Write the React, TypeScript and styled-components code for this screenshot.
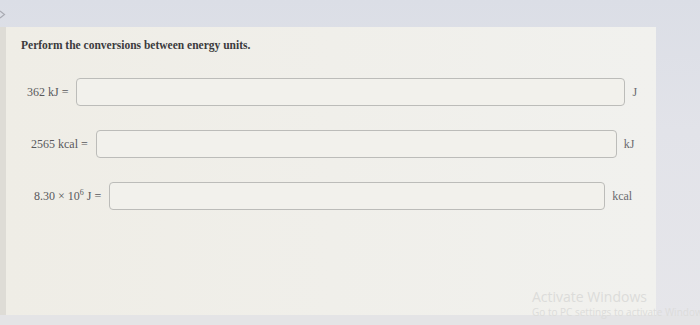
import React, { FC } from "react";
import styled, { createGlobalStyle } from "styled-components";

const GlobalStyle = createGlobalStyle`
  html, body {
    margin: 0;
    padding: 0;
    width: 700px;
    height: 325px;
    overflow: hidden;
    background-color: #e1e3e9;
  }
  #root {
    width: 700px;
    height: 325px;
  }
`;

const Screen = styled.div`
  position: relative;
  width: 700px;
  height: 325px;
  display: flex;
  flex-direction: column;
  background: linear-gradient(180deg, #dbdee6 0%, #e2e3e9 40%, #e6e6ea 100%);
`;

const TopBar = styled.div`
  height: 27px;
  display: flex;
  align-items: flex-start;
  padding-top: 10px;
  box-sizing: border-box;
`;

const Middle = styled.div`
  display: flex;
  height: 288px;
`;

const LeftStrip = styled.div`
  width: 6px;
  background-color: #dedcd6;
`;

const Panel = styled.div`
  width: 650px;
  box-sizing: border-box;
  padding: 11px 0 0 15px;
  background: linear-gradient(90deg, #efede6 0%, #f0efea 50%, #f1f1ee 100%);
  font-family: "Liberation Serif", "Times New Roman", serif;
`;

const BottomStrip = styled.div`
  flex: 1;
  background-color: #e4e4e6;
`;

const Title = styled.div`
  font-size: 11.5px;
  line-height: 14px;
  font-weight: bold;
  color: #3b3b3d;
  margin-bottom: 26px;
`;

const Row = styled.div<{ $indent: number }>`
  display: flex;
  align-items: center;
  height: 28px;
  padding-left: ${(p) => p.$indent}px;
  margin-bottom: 24px;
`;

const Label = styled.span`
  font-size: 12px;
  color: #59595c;
  white-space: nowrap;
  margin-right: 8px;

  sup {
    font-size: 8px;
  }
`;

const Field = styled.input<{ $width: number }>`
  width: ${(p) => p.$width}px;
  height: 28px;
  box-sizing: border-box;
  border: 1px solid #bcbcb9;
  border-radius: 4px;
  background-color: #f2f1ec;
  outline: none;
`;

const Unit = styled.span`
  font-size: 12px;
  color: #6a6a6e;
  margin-left: 7px;
`;

const Watermark = styled.div`
  position: absolute;
  left: 532px;
  top: 288px;
  font-family: "Open Sans", "DejaVu Sans", sans-serif;
  color: #dcdcda;
  white-space: nowrap;

  .big {
    font-size: 14px;
    line-height: 18px;
  }
  .small {
    font-size: 10px;
    line-height: 13px;
  }
`;

type Conversion = {
  indent: number;
  width: number;
  label: React.ReactNode;
  unit: string;
};

const rows: Conversion[] = [
  { indent: 6, width: 549, label: <>362 kJ =</>, unit: "J" },
  { indent: 10, width: 521, label: <>2565 kcal =</>, unit: "kJ" },
  {
    indent: 13,
    width: 496,
    label: (
      <>
        8.30 × 10<sup>6</sup> J =
      </>
    ),
    unit: "kcal",
  },
];

const App: FC = () => (
  <>
    <GlobalStyle />
    <Screen>
      <TopBar>
        <svg width="6" height="9" viewBox="0 0 6 9">
          <path d="M0 1 L4.5 4.5 L0 8" fill="none" stroke="#a9abb3" strokeWidth="1.2" />
        </svg>
      </TopBar>
      <Middle>
        <LeftStrip />
        <Panel>
          <Title>Perform the conversions between energy units.</Title>
          {rows.map((r, i) => (
            <Row key={i} $indent={r.indent}>
              <Label>{r.label}</Label>
              <Field $width={r.width} type="text" />
              <Unit>{r.unit}</Unit>
            </Row>
          ))}
        </Panel>
      </Middle>
      <BottomStrip />
      <Watermark>
        <div className="big">Activate Windows</div>
        <div className="small">Go to PC settings to activate Windows.</div>
      </Watermark>
    </Screen>
  </>
);

export default App;
